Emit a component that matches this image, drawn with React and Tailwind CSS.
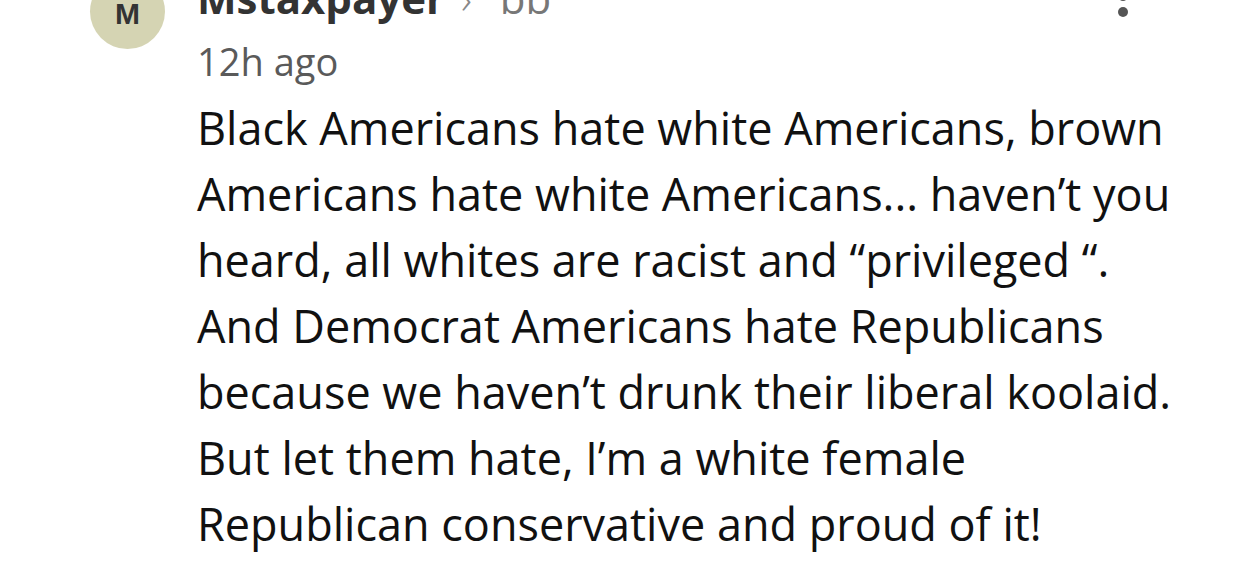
export default function App() {
  const lines = [
    "Black Americans hate white Americans, brown",
    "Americans hate white Americans... haven\u2019t you",
    "heard, all whites are racist and \u201cprivileged \u201c.",
    "And Democrat Americans hate Republicans",
    "because we haven\u2019t drunk their liberal koolaid.",
    "But let them hate, I\u2019m a white female",
    "Republican conservative and proud of it!",
  ];
  return (
    <div className="w-[1242px] h-[588px] overflow-hidden bg-white" style={{ fontFamily: '"Open Sans", "Liberation Sans", sans-serif' }}>
      <div className="flex -mt-[26px] pl-[90px]">
        <div className="w-[75px] h-[75px] shrink-0 rounded-full bg-[#d5d4b3] flex items-center justify-center pt-[5px]">
          <span className="text-[30px] font-bold text-[#333] leading-none" style={{ fontFamily: '"Liberation Sans", Arial, sans-serif' }}>M</span>
        </div>
        <div className="ml-[32px] flex-1">
          <div className="flex items-start h-[48px] pr-[114px]">
            <div className="flex items-center text-[42px] leading-[48px]">
              <span className="font-bold text-[#333]">Mstaxpayer</span>
              <span className="ml-[16px] text-[#888] font-light">›</span>
              <span className="ml-[28px] text-[#777]">bb</span>
            </div>
            <svg className="ml-auto" width="10" height="48" viewBox="0 0 10 48">
              <circle cx="5" cy="6" r="5" fill="#555" />
              <circle cx="5" cy="22" r="5" fill="#555" />
              <circle cx="5" cy="38" r="5" fill="#555" />
            </svg>
          </div>
          <div className="mt-[15px] text-[38px] leading-[48px] text-[#5a5a5a]">12h ago</div>
          <div className="mt-[10px] text-[45px] leading-[66px] text-[#111] whitespace-nowrap">
            {lines.map((l, i) => (
              <div key={i}>{l}</div>
            ))}
          </div>
        </div>
      </div>
    </div>
  );
}
